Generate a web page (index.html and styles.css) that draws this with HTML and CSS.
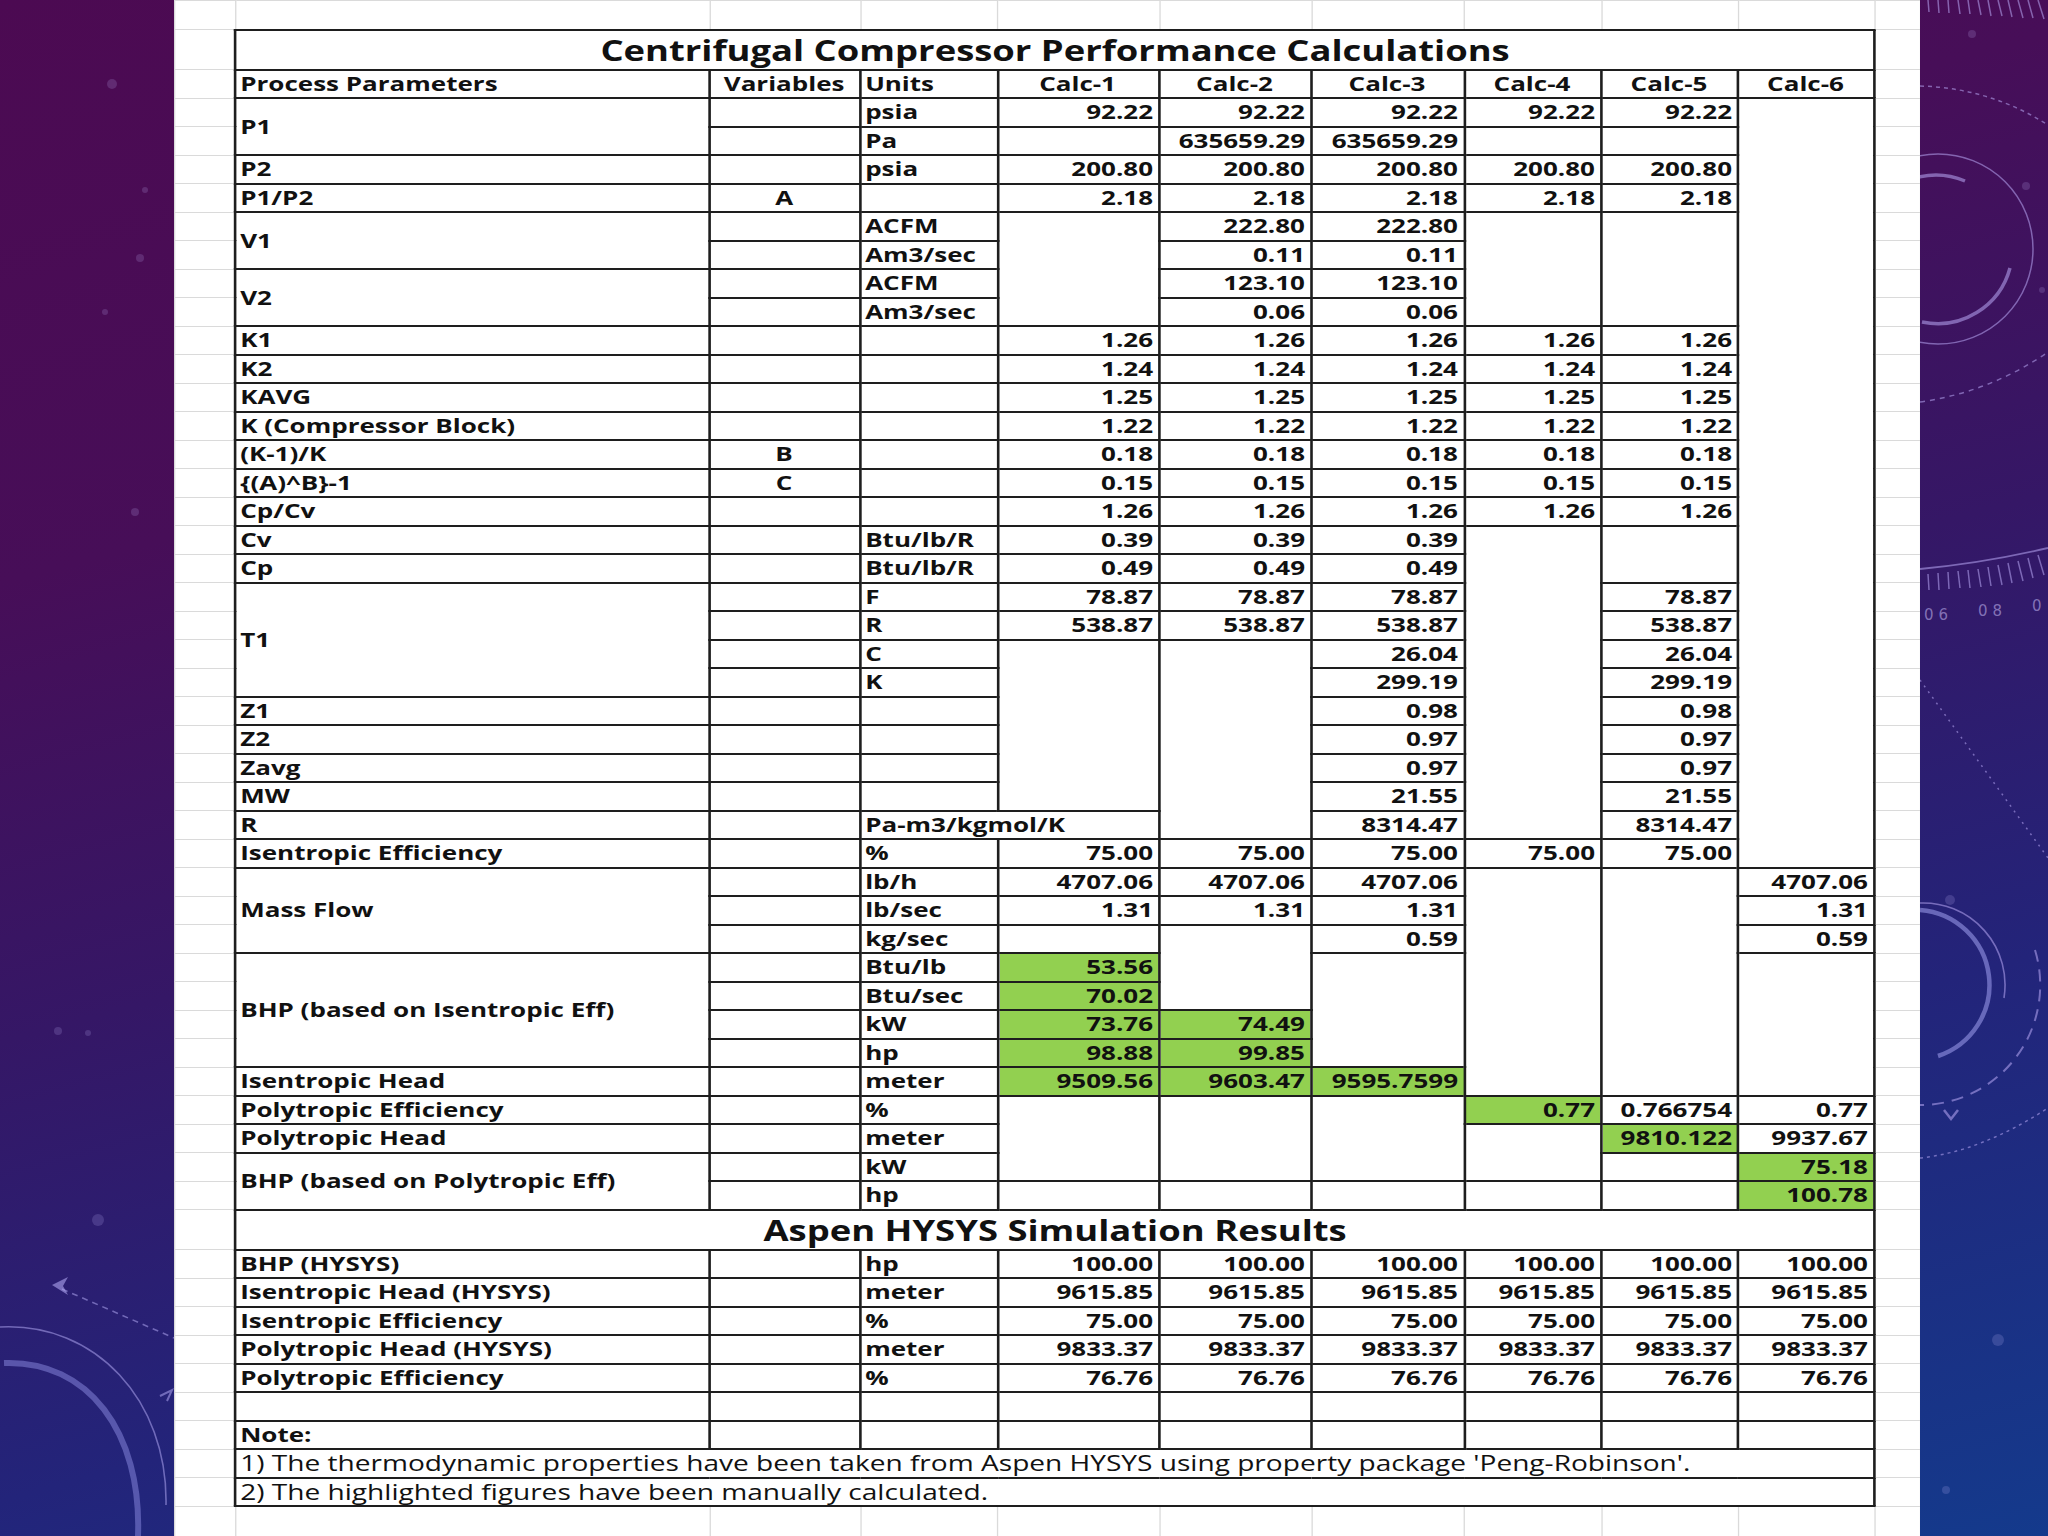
FILE: index.html
```html
<!DOCTYPE html>
<html lang="en">
<head>
<meta charset="utf-8">
<title>Centrifugal Compressor Performance Calculations</title>
<link rel="stylesheet" href="styles.css">
</head>
<body>
<div class="slide">
  <div class="side side-left">
    <svg class="deco" width="174" height="1536" viewBox="0 0 174 1536">
      <g fill="rgba(200,190,255,0.18)">
        <circle cx="112" cy="84" r="5"/><circle cx="145" cy="190" r="3"/><circle cx="140" cy="258" r="4"/>
        <circle cx="105" cy="312" r="3"/><circle cx="135" cy="512" r="4"/><circle cx="58" cy="1031" r="4"/>
        <circle cx="88" cy="1033" r="3"/><circle cx="98" cy="1220" r="6"/>
      </g>
      <g fill="none" stroke="rgba(175,165,240,0.55)">
        <path d="M0 1327 C 95 1322 168 1400 166 1505" stroke-width="1.6"/>
        <path d="M4 1363 C 88 1360 142 1432 138 1536" stroke-width="6" stroke="rgba(140,140,225,0.5)"/>
        <path d="M62 1289 L174 1338" stroke-width="1.6" stroke-dasharray="6 5"/>
        <path d="M160 1396 L172 1390 L167 1401" stroke-width="2"/>
      </g>
      <path d="M52 1285 L68 1277 L63 1286 L68 1295 Z" fill="rgba(175,165,240,0.6)"/>
    </svg>
  </div>
  <div class="sheet">
    <table class="grid">
      <colgroup>
        <col class="w-ml"><col class="w-a"><col class="w-b"><col class="w-c"><col class="w-d"><col class="w-e"><col class="w-f"><col class="w-g"><col class="w-h"><col class="w-i"><col class="w-mr">
      </colgroup>
      <tbody>
        <tr class="r-top"><td class="m"></td><td class="m"></td><td class="m"></td><td class="m"></td><td class="m"></td><td class="m"></td><td class="m"></td><td class="m"></td><td class="m"></td><td class="m"></td><td class="m"></td></tr>
        <tr class="r-title"><td class="m"></td><td colspan="9" class="title">Centrifugal Compressor Performance Calculations</td><td class="m"></td></tr>
        <tr><td class="m"></td><td>Process Parameters</td><td class="c">Variables</td><td>Units</td><td class="c">Calc-1</td><td class="c">Calc-2</td><td class="c">Calc-3</td><td class="c">Calc-4</td><td class="c">Calc-5</td><td class="c">Calc-6</td><td class="m"></td></tr>
        <tr><td class="m"></td><td rowspan="2">P1</td><td></td><td>psia</td><td class="n">92.22</td><td class="n">92.22</td><td class="n">92.22</td><td class="n">92.22</td><td class="n">92.22</td><td rowspan="27"></td><td class="m"></td></tr>
        <tr><td class="m"></td><td></td><td>Pa</td><td></td><td class="n">635659.29</td><td class="n">635659.29</td><td></td><td></td><td class="m"></td></tr>
        <tr><td class="m"></td><td>P2</td><td></td><td>psia</td><td class="n">200.80</td><td class="n">200.80</td><td class="n">200.80</td><td class="n">200.80</td><td class="n">200.80</td><td class="m"></td></tr>
        <tr><td class="m"></td><td>P1/P2</td><td class="c">A</td><td></td><td class="n">2.18</td><td class="n">2.18</td><td class="n">2.18</td><td class="n">2.18</td><td class="n">2.18</td><td class="m"></td></tr>
        <tr><td class="m"></td><td rowspan="2">V1</td><td></td><td>ACFM</td><td rowspan="4"></td><td class="n">222.80</td><td class="n">222.80</td><td rowspan="4"></td><td rowspan="4"></td><td class="m"></td></tr>
        <tr><td class="m"></td><td></td><td>Am3/sec</td><td class="n">0.11</td><td class="n">0.11</td><td class="m"></td></tr>
        <tr><td class="m"></td><td rowspan="2">V2</td><td></td><td>ACFM</td><td class="n">123.10</td><td class="n">123.10</td><td class="m"></td></tr>
        <tr><td class="m"></td><td></td><td>Am3/sec</td><td class="n">0.06</td><td class="n">0.06</td><td class="m"></td></tr>
        <tr><td class="m"></td><td>K1</td><td></td><td></td><td class="n">1.26</td><td class="n">1.26</td><td class="n">1.26</td><td class="n">1.26</td><td class="n">1.26</td><td class="m"></td></tr>
        <tr><td class="m"></td><td>K2</td><td></td><td></td><td class="n">1.24</td><td class="n">1.24</td><td class="n">1.24</td><td class="n">1.24</td><td class="n">1.24</td><td class="m"></td></tr>
        <tr><td class="m"></td><td>KAVG</td><td></td><td></td><td class="n">1.25</td><td class="n">1.25</td><td class="n">1.25</td><td class="n">1.25</td><td class="n">1.25</td><td class="m"></td></tr>
        <tr><td class="m"></td><td>K (Compressor Block)</td><td></td><td></td><td class="n">1.22</td><td class="n">1.22</td><td class="n">1.22</td><td class="n">1.22</td><td class="n">1.22</td><td class="m"></td></tr>
        <tr><td class="m"></td><td>(K-1)/K</td><td class="c">B</td><td></td><td class="n">0.18</td><td class="n">0.18</td><td class="n">0.18</td><td class="n">0.18</td><td class="n">0.18</td><td class="m"></td></tr>
        <tr><td class="m"></td><td>{(A)^B}-1</td><td class="c">C</td><td></td><td class="n">0.15</td><td class="n">0.15</td><td class="n">0.15</td><td class="n">0.15</td><td class="n">0.15</td><td class="m"></td></tr>
        <tr><td class="m"></td><td>Cp/Cv</td><td></td><td></td><td class="n">1.26</td><td class="n">1.26</td><td class="n">1.26</td><td class="n">1.26</td><td class="n">1.26</td><td class="m"></td></tr>
        <tr><td class="m"></td><td>Cv</td><td></td><td>Btu/lb/R</td><td class="n">0.39</td><td class="n">0.39</td><td class="n">0.39</td><td rowspan="11"></td><td rowspan="2"></td><td class="m"></td></tr>
        <tr><td class="m"></td><td>Cp</td><td></td><td>Btu/lb/R</td><td class="n">0.49</td><td class="n">0.49</td><td class="n">0.49</td><td class="m"></td></tr>
        <tr><td class="m"></td><td rowspan="4">T1</td><td></td><td>F</td><td class="n">78.87</td><td class="n">78.87</td><td class="n">78.87</td><td class="n">78.87</td><td class="m"></td></tr>
        <tr><td class="m"></td><td></td><td>R</td><td class="n">538.87</td><td class="n">538.87</td><td class="n">538.87</td><td class="n">538.87</td><td class="m"></td></tr>
        <tr><td class="m"></td><td></td><td>C</td><td rowspan="6"></td><td rowspan="7"></td><td class="n">26.04</td><td class="n">26.04</td><td class="m"></td></tr>
        <tr><td class="m"></td><td></td><td>K</td><td class="n">299.19</td><td class="n">299.19</td><td class="m"></td></tr>
        <tr><td class="m"></td><td>Z1</td><td></td><td></td><td class="n">0.98</td><td class="n">0.98</td><td class="m"></td></tr>
        <tr><td class="m"></td><td>Z2</td><td></td><td></td><td class="n">0.97</td><td class="n">0.97</td><td class="m"></td></tr>
        <tr><td class="m"></td><td>Zavg</td><td></td><td></td><td class="n">0.97</td><td class="n">0.97</td><td class="m"></td></tr>
        <tr><td class="m"></td><td>MW</td><td></td><td></td><td class="n">21.55</td><td class="n">21.55</td><td class="m"></td></tr>
        <tr><td class="m"></td><td>R</td><td></td><td colspan="2">Pa-m3/kgmol/K</td><td class="n">8314.47</td><td class="n">8314.47</td><td class="m"></td></tr>
        <tr><td class="m"></td><td>Isentropic Efficiency</td><td></td><td>%</td><td class="n">75.00</td><td class="n">75.00</td><td class="n">75.00</td><td class="n">75.00</td><td class="n">75.00</td><td class="m"></td></tr>
        <tr><td class="m"></td><td rowspan="3">Mass Flow</td><td></td><td>lb/h</td><td class="n">4707.06</td><td class="n">4707.06</td><td class="n">4707.06</td><td rowspan="8"></td><td rowspan="8"></td><td class="n">4707.06</td><td class="m"></td></tr>
        <tr><td class="m"></td><td></td><td>lb/sec</td><td class="n">1.31</td><td class="n">1.31</td><td class="n">1.31</td><td class="n">1.31</td><td class="m"></td></tr>
        <tr><td class="m"></td><td></td><td>kg/sec</td><td></td><td rowspan="3"></td><td class="n">0.59</td><td class="n">0.59</td><td class="m"></td></tr>
        <tr><td class="m"></td><td rowspan="4">BHP (based on Isentropic Eff)</td><td></td><td>Btu/lb</td><td class="n g">53.56</td><td rowspan="4"></td><td rowspan="5"></td><td class="m"></td></tr>
        <tr><td class="m"></td><td></td><td>Btu/sec</td><td class="n g">70.02</td><td class="m"></td></tr>
        <tr><td class="m"></td><td></td><td>kW</td><td class="n g">73.76</td><td class="n g">74.49</td><td class="m"></td></tr>
        <tr><td class="m"></td><td></td><td>hp</td><td class="n g">98.88</td><td class="n g">99.85</td><td class="m"></td></tr>
        <tr><td class="m"></td><td>Isentropic Head</td><td></td><td>meter</td><td class="n g">9509.56</td><td class="n g">9603.47</td><td class="n g">9595.7599</td><td class="m"></td></tr>
        <tr><td class="m"></td><td>Polytropic Efficiency</td><td></td><td>%</td><td rowspan="3"></td><td rowspan="3"></td><td rowspan="3"></td><td class="n g">0.77</td><td class="n">0.766754</td><td class="n">0.77</td><td class="m"></td></tr>
        <tr><td class="m"></td><td>Polytropic Head</td><td></td><td>meter</td><td rowspan="2"></td><td class="n g">9810.122</td><td class="n">9937.67</td><td class="m"></td></tr>
        <tr><td class="m"></td><td rowspan="2">BHP (based on Polytropic Eff)</td><td></td><td>kW</td><td></td><td class="n g">75.18</td><td class="m"></td></tr>
        <tr><td class="m"></td><td></td><td>hp</td><td></td><td></td><td></td><td></td><td></td><td class="n g">100.78</td><td class="m"></td></tr>
        <tr class="r-title"><td class="m"></td><td colspan="9" class="title">Aspen HYSYS Simulation Results</td><td class="m"></td></tr>
        <tr><td class="m"></td><td>BHP (HYSYS)</td><td></td><td>hp</td><td class="n">100.00</td><td class="n">100.00</td><td class="n">100.00</td><td class="n">100.00</td><td class="n">100.00</td><td class="n">100.00</td><td class="m"></td></tr>
        <tr><td class="m"></td><td>Isentropic Head (HYSYS)</td><td></td><td>meter</td><td class="n">9615.85</td><td class="n">9615.85</td><td class="n">9615.85</td><td class="n">9615.85</td><td class="n">9615.85</td><td class="n">9615.85</td><td class="m"></td></tr>
        <tr><td class="m"></td><td>Isentropic Efficiency</td><td></td><td>%</td><td class="n">75.00</td><td class="n">75.00</td><td class="n">75.00</td><td class="n">75.00</td><td class="n">75.00</td><td class="n">75.00</td><td class="m"></td></tr>
        <tr><td class="m"></td><td>Polytropic Head (HYSYS)</td><td></td><td>meter</td><td class="n">9833.37</td><td class="n">9833.37</td><td class="n">9833.37</td><td class="n">9833.37</td><td class="n">9833.37</td><td class="n">9833.37</td><td class="m"></td></tr>
        <tr><td class="m"></td><td>Polytropic Efficiency</td><td></td><td>%</td><td class="n">76.76</td><td class="n">76.76</td><td class="n">76.76</td><td class="n">76.76</td><td class="n">76.76</td><td class="n">76.76</td><td class="m"></td></tr>
        <tr><td class="m"></td><td></td><td></td><td></td><td></td><td></td><td></td><td></td><td></td><td></td><td class="m"></td></tr>
        <tr><td class="m"></td><td>Note:</td><td></td><td></td><td></td><td></td><td></td><td></td><td></td><td></td><td class="m"></td></tr>
        <tr><td class="m"></td><td colspan="9" class="note">1) The thermodynamic properties have been taken from Aspen HYSYS using property package 'Peng-Robinson'.</td><td class="m"></td></tr>
        <tr><td class="m"></td><td colspan="9" class="note">2) The highlighted figures have been manually calculated.</td><td class="m"></td></tr>
        <tr class="r-bottom"><td class="m"></td><td class="m"></td><td class="m"></td><td class="m"></td><td class="m"></td><td class="m"></td><td class="m"></td><td class="m"></td><td class="m"></td><td class="m"></td><td class="m"></td></tr>
      </tbody>
    </table>
  </div>
  <div class="side side-right">
    <svg class="deco" width="128" height="1536" viewBox="0 0 128 1536">
      <g fill="rgba(200,190,255,0.18)">
        <circle cx="52" cy="34" r="4"/><circle cx="106" cy="186" r="4"/><circle cx="122" cy="290" r="3"/>
        <circle cx="30" cy="900" r="5"/><circle cx="78" cy="1340" r="6"/><circle cx="26" cy="1490" r="4"/>
      </g>
      <g fill="none" stroke="rgba(185,170,245,0.55)" stroke-width="1.5">
        <path d="M8 0 L9 12 M18 0 L19 13 M28 0 L29 13 M38 0 L40 14 M48 0 L50 14 M58 0 L61 15 M68 0 L71 16 M78 0 L82 16 M88 0 L92 17 M98 0 L103 18 M108 0 L113 18 M118 0 L124 19"/>
        <path d="M0 86 Q 70 88 128 125" stroke-dasharray="4 4"/>
        <circle cx="18" cy="249" r="95"/>
        <path d="M-5 178 A75 75 0 0 1 45 181" stroke-width="3.5"/>
        <path d="M90 268 A75 75 0 0 1 2 322" stroke-width="3.5"/>
        <path d="M0 402 Q 70 392 128 352" stroke-dasharray="5 5"/>
        <path d="M0 569 Q 64 563 128 548" stroke-width="1.8"/>
        <path d="M8 574 L9 590 M18 573 L19 590 M28 572 L29 589 M38 571 L40 588 M48 570 L50 588 M58 569 L61 587 M68 567 L71 586 M78 565 L82 585 M88 563 L92 583 M98 561 L103 581 M108 558 L113 578 M118 555 L124 575"/>
        <path d="M0 680 L128 858" stroke-dasharray="2 5"/>
        <path d="M0 903 A82 82 0 0 1 84 998" stroke-width="1.6"/>
        <path d="M0 910 A75 75 0 0 1 18 1056" stroke-width="4.5" stroke="rgba(150,150,230,0.6)"/>
        <path d="M115 950 A120 120 0 0 1 0 1105" stroke-dasharray="12 8" stroke-width="2"/>
        <path d="M24 1110 L31 1119 L38 1110" stroke-width="2.5"/>
        <path d="M0 1158 Q 60 1152 128 1108" stroke-dasharray="3 4"/>
      </g>
      <text x="4" y="620" class="dial">06</text>
      <text x="58" y="616" class="dial">08</text>
      <text x="112" y="611" class="dial">0</text>
    </svg>
  </div>
</div>
</body>
</html>
```
FILE: styles.css
```css
* { box-sizing: border-box; }
html, body { margin: 0; padding: 0; }
body {
  width: 2048px;
  height: 1536px;
  overflow: hidden;
  background: linear-gradient(165deg, #4c0a52 0%, #470e58 28%, #351766 50%, #23247a 72%, #143a8c 100%);
  font-family: "Open Sans", "Liberation Sans", sans-serif;
}
.slide { display: flex; width: 2048px; height: 1536px; }
.side { flex: none; height: 1536px; }
.side-left { width: 174px; }
.side-right { width: 128px; }
.deco { display: block; }
.dial { font-family: "DejaVu Sans", sans-serif; font-size: 15px; letter-spacing: 5px; fill: rgba(200, 190, 245, 0.55); }
.sheet {
  flex: none;
  width: 1746px;
  height: 1536px;
  background: #fff;
  overflow: hidden;
}
.grid {
  border-collapse: collapse;
  table-layout: fixed;
  width: 1343.05px;
  transform: scaleX(1.3);
  transform-origin: 0 0;
}
.w-ml { width: 46.92px; }
.w-a { width: 364.6px; }
.w-b { width: 116.15px; }
.w-c { width: 105.38px; }
.w-d { width: 124.6px; }
.w-e { width: 116.9px; }
.w-f { width: 117.7px; }
.w-g { width: 105.4px; }
.w-h { width: 105.4px; }
.w-i { width: 104.6px; }
.w-mr { width: 35.4px; }
.grid tr { height: 28.5px; }
.grid tr.r-top { height: 29px; }
.grid tr.r-title { height: 40px; }
.grid tr.r-bottom { height: 31px; }
.grid td {
  border: 2px solid #1e1e1e;
  padding: 0 4px 0 2.5px;
  font-size: 20px;
  font-weight: 700;
  line-height: 24px;
  color: #111;
  white-space: nowrap;
  overflow: hidden;
  vertical-align: middle;
  text-align: left;
}
.grid td.m { border: 1px solid #dadada; padding: 0; }
.grid td.n { text-align: right; }
.grid td.c { text-align: center; }
.grid td.g { background: #92d050; }
.grid td.title { font-size: 28px; text-align: center; line-height: 32px; padding: 1px 0 0 0; }
.grid td.note { font-weight: 400; font-size: 21.6px; }
```
